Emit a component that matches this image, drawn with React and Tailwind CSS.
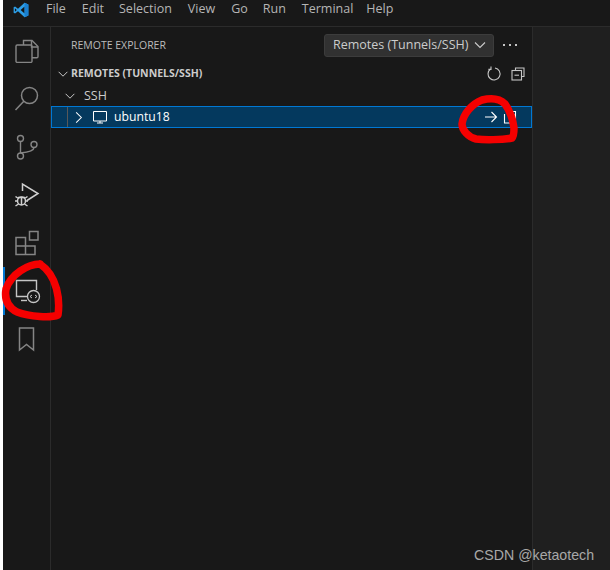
import React from 'react';

const menus = [
    ['File', 'ml-[17px]'],
    ['Edit', 'ml-[16px]'],
    ['Selection', 'ml-[15px]'],
    ['View', 'ml-[16px]'],
    ['Go', 'ml-[16px]'],
    ['Run', 'ml-[15px]'],
    ['Terminal', 'ml-[16px]'],
    ['Help', 'ml-[13px]'],
];

const Chevron = ({ dir = 'down', className = '' }) => (
    <svg width="16" height="16" viewBox="0 0 16 16" fill="none" stroke="currentColor" strokeWidth="1.1" className={className}>
        {dir === 'down' ? <path d="M3 5.5l5 5 5-5" /> : <path d="M5.5 2.5l5.5 5.5-5.5 5.5" />}
    </svg>
);

const VsLogo = () => (
    <svg width="16" height="16" viewBox="0 0 18 18" className="ml-[10px] shrink-0">
        <path d="M13 .8L17.3 2.9V15.1L13 17.2 5.6 10.3 2.3 12.9.7 12V6L2.3 5.1 5.6 7.7z" fill="#2d9fe8" />
        <path d="M13 5.2L8.6 9 13 12.8z" fill="#141414" />
        <path d="M2.2 7L4.2 9 2.2 11z" fill="#141414" />
        <path d="M13 .8L17.3 2.9V15.1L13 17.2z" fill="#1a80d0" />
    </svg>
);

// activity bar icons
const activity = [
    <svg key="files" width="28" height="28" viewBox="0 0 28 28" fill="none" stroke="#858585" strokeWidth="1.4">
        <path d="M10.5 8V3.5h8.5l6 6V19.5a1.2 1.2 0 0 1-1.2 1.2H19" />
        <path d="M18.5 3.5v6.5h6.5" />
        <path d="M4.2 8h13.6a1.2 1.2 0 0 1 1.2 1.2v15a1.2 1.2 0 0 1-1.2 1.2H4.2A1.2 1.2 0 0 1 3 24.2v-15A1.2 1.2 0 0 1 4.2 8z" />
    </svg>,
    <svg key="search" width="28" height="28" viewBox="0 0 28 28" fill="none" stroke="#858585" strokeWidth="1.5">
        <circle cx="16.5" cy="10.5" r="8" />
        <path d="M10.8 16.2L2.5 25" />
    </svg>,
    <svg key="scm" width="28" height="28" viewBox="0 0 28 28" fill="none" stroke="#858585" strokeWidth="1.4">
        <circle cx="7.5" cy="5.5" r="3" />
        <circle cx="7.5" cy="23" r="3" />
        <circle cx="21" cy="11.5" r="3" />
        <path d="M7.5 8.5v11.5M21 14.5c0 3-4 4.5-13.5 5.5" />
    </svg>,
    <svg key="debug" width="28" height="28" viewBox="0 0 28 28" fill="none" stroke="#d0d0d0" strokeWidth="1.5">
        <path d="M9.5 10V3l15.5 9.5-11 7" />
        <circle cx="8.5" cy="20" r="4" />
        <path d="M2.5 15.5l3 2M14.5 15.5l-3 2M2 20h2.5M12.5 20H15M2.5 25l3-2M14.5 25l-3-2M5 16.5h7M8.5 17v7" />
    </svg>,
    <svg key="ext" width="28" height="28" viewBox="0 0 28 28" fill="none" stroke="#858585" strokeWidth="1.5">
        <path d="M3 8.5h9.5v8.5H22v8.5H3zM3 17h9.5v8.5" />
        <rect x="16.5" y="2.5" width="8.5" height="8.5" />
    </svg>,
    <svg key="remote" width="28" height="28" viewBox="0 0 28 28" fill="none" stroke="#c5c5c5" strokeWidth="1.4">
        <path d="M14 19.5H3.5V3.5h20V13" />
        <path d="M8 23.5h6" />
        <circle cx="20.5" cy="19.5" r="6" fill="#181818" strokeWidth="1.3" />
        <path d="M19 18l-2 1.5 2 1.5M22 18l2 1.5-2 1.5" strokeWidth="1" />
    </svg>,
    <svg key="bookmark" width="28" height="28" viewBox="0 0 28 28" fill="none" stroke="#858585" strokeWidth="1.5">
        <path d="M6.5 3h14v22l-7-5.5-7 5.5z" />
    </svg>,
];

const App = () => {
    return (
        <div className="relative flex h-[570px] w-[610px] overflow-hidden bg-white font-['Open_Sans','Noto_Sans',sans-serif]">
            <div className="ml-[3px] flex min-w-0 flex-1 flex-col bg-[#181818]">
                {/* Title bar */}
                <div className="flex h-[27px] shrink-0 items-center border-b border-[#2b2b2b] pb-[7px] text-[12.5px] text-[#b5b5b5]">
                    <VsLogo />
                    {menus.map(([label, gap]) => (
                        <span key={label} className={gap}>{label}</span>
                    ))}
                </div>

                <div className="flex min-h-0 flex-1">
                    {/* Activity bar */}
                    <div className="relative flex w-[48px] shrink-0 flex-col items-center gap-[20px] border-r border-[#2b2b2b] pt-[10px] pl-[1px]">
                        {activity}
                        <div className="absolute left-0 top-[240px] h-[48px] w-[2px] bg-[#0078d4]" />
                    </div>

                    {/* Side bar */}
                    <div className="flex w-[482px] shrink-0 flex-col border-r border-[#2b2b2b] text-[#cccccc]">
                        <div className="flex h-[35px] items-center pl-[20px] pr-[15px] pt-[1px]">
                            <span className="pt-[1px] text-[10.5px] text-[#bbbbbb]">REMOTE EXPLORER</span>
                            <div className="ml-auto flex h-[23px] w-[170px] items-center rounded-[3px] border border-[#3c3c3c] bg-[#313131] pl-[8px] text-[12.5px] text-[#cccccc]">
                                Remotes (Tunnels/SSH)
                                <Chevron className="ml-[4px]" />
                            </div>
                            <span className="ml-[9px] flex w-[14px] justify-between">
                                <i className="h-[2px] w-[2px] bg-[#c5c5c5]" />
                                <i className="h-[2px] w-[2px] bg-[#c5c5c5]" />
                                <i className="h-[2px] w-[2px] bg-[#c5c5c5]" />
                            </span>
                        </div>

                        <div className="flex h-[22px] items-center pl-[5px] pr-[6px] pt-[2px] text-[10.5px] font-bold">
                            <Chevron className="mr-[1px] h-[14px] w-[14px]" />
                            REMOTES (TUNNELS/SSH)
                            <svg width="16" height="16" viewBox="0 0 16 16" fill="none" stroke="#c5c5c5" strokeWidth="1.1" className="ml-auto">
                                <path d="M4.6 3a6 6 0 1 0 4.4-1M5 .6V3.4H2.4" />
                            </svg>
                            <svg width="16" height="16" viewBox="0 0 16 16" fill="none" stroke="#c5c5c5" strokeWidth="1.1" className="ml-[8px]">
                                <path d="M5.5 4V2h8.5v8.5h-2.5" />
                                <rect x="2" y="4.5" width="9.5" height="9.5" />
                                <path d="M4.5 9.2h4.5" />
                            </svg>
                        </div>

                        <div className="flex h-[22px] items-center pl-[12px] pt-[2px] text-[12.5px]">
                            <Chevron className="mr-[7px] h-[14px] w-[14px]" />
                            SSH
                        </div>

                        <div className="flex h-[22px] items-center border border-[#0078d4] bg-[#04395e] text-[12.2px] text-white">
                            <div className="ml-[15px] flex h-full items-center border-l border-[#585858] pl-[3px]">
                                <Chevron dir="right" className="h-[15px] w-[15px]" />
                                <svg width="16" height="16" viewBox="0 0 16 16" fill="none" stroke="#fff" strokeWidth="1" className="ml-[6px]">
                                    <path d="M1.5 2.5h13v9.5h-13zM5 14h6M8 12v2" />
                                </svg>
                                <span className="ml-[6px]">ubuntu18</span>
                            </div>
                            <div className="ml-auto mr-[13px] flex items-center gap-[3px]">
                                <svg width="16" height="16" viewBox="0 0 16 16" fill="none" stroke="#fff" strokeWidth="1.1">
                                    <path d="M2 8h11.5M8.5 3l5 5-5 5" />
                                </svg>
                                <svg width="16" height="16" viewBox="0 0 16 16" fill="none" stroke="#fff" strokeWidth="1.1">
                                    <path d="M2.5 5v9h9.5V5M6 2.5h7.5V10M7 1v4M5 3h4" />
                                </svg>
                            </div>
                        </div>
                    </div>

                    {/* Empty editor area */}
                    <div className="flex flex-1 bg-[#1f1f1f]" />
                </div>
            </div>

            {/* Hand drawn red marks, watermark */}
            <svg width="610" height="570" viewBox="0 0 610 570" fill="none" stroke="#f50000" strokeWidth="7.5" strokeLinecap="round" strokeLinejoin="round" className="pointer-events-none absolute left-0 top-0">
                <path d="M40 264C28 264 11 274 6 289c-2 12 3 19 11 23 13 5 34 6 41 3 2-14 0-39-18-51" />
                <path d="M482 100c8-2 17-2 23 4 5 7 8 16 9 24 0 4 0 8-2 10-10 2-28 2-36 1-8-2-14-9-14-15 1-10 10-20 20-24z" />
            </svg>
            <span className="absolute left-[474px] top-[545px] font-['Liberation_Sans',sans-serif] text-[14.2px] text-[#a8a8a8]">CSDN @ketaotech</span>
        </div>
    );
};

export default App;
